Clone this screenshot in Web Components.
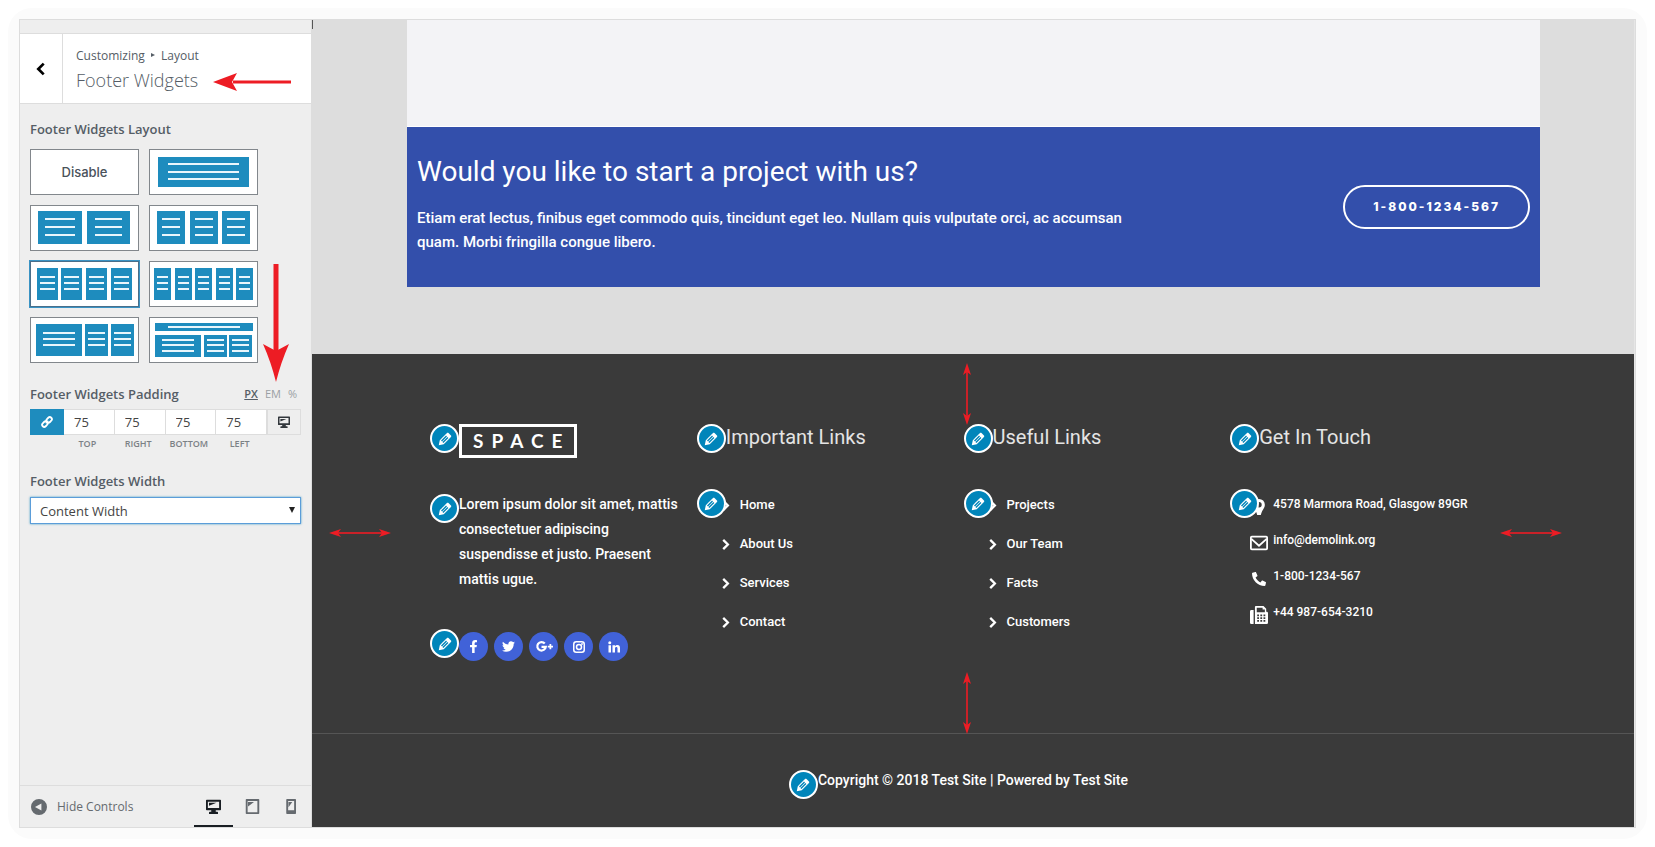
<!DOCTYPE html>
<html lang="en">
<head>
<meta charset="utf-8">
<title>Customizing - Footer Widgets</title>
<style>
  html {
    height: 100%;
  }

  body {
    margin: 0;
    min-height: 100%;
    box-sizing: border-box;
    padding: 8px;
    display: flex;
    background: #fff;
    font-family: "Open Sans", "Noto Sans", sans-serif;
  }

  customizer-app {
    flex: 1;
  }
</style>
</head>
<body>
<customizer-app></customizer-app>

<script>
const makeTemplate = (html) => {
  const template = document.createElement('template');
  template.innerHTML = html;
  return template;
};

class BaseElement extends HTMLElement {
  constructor() {
    super();
    this.shadowRoot_ = this.attachShadow({ mode: 'open' });
    this.shadowRoot_.appendChild(this.constructor.template.content.cloneNode(true));
  }

  $(selector) {
    return this.shadowRoot_.querySelector(selector);
  }
}

/* ---------- icons ---------- */

const icons = {
  pencil: ['0 0 20 20', '<path d="M13.89 3.39l2.71 2.72c.46.46.42 1.24.03 1.64l-8.01 8.02-5.56 1.16 1.16-5.58s7.6-7.63 7.99-8.03c.39-.39 1.22-.39 1.68.07zm-2.73 2.79l-5.59 5.61 1.11 1.11 5.54-5.65zm-2.97 8.23l5.58-5.6-1.07-1.08-5.59 5.6z"/>'],
  back: ['0 0 20 20', '<path d="M13 4l-6 6 6 6" fill="none" stroke="currentColor" stroke-width="3"/>'],
  desktop: ['0 0 20 20', '<path fill-rule="evenodd" d="M1 1h18a1 1 0 0 1 1 1v12a1 1 0 0 1-1 1h-6v2h2a1 1 0 0 1 1 1v2H4v-2a1 1 0 0 1 1-1h2v-2H1a1 1 0 0 1-1-1V2a1 1 0 0 1 1-1zm1.500 2.500v8.500h15v-8.500zM4 5h10L4 9z"/>'],
  tablet: ['0 0 20 20', '<path fill-rule="evenodd" d="M2 0h16a1 1 0 0 1 1 1v18a1 1 0 0 1-1 1H2a1 1 0 0 1-1-1V1a1 1 0 0 1 1-1zm1.500 2.500v15h13v-15zM4 4h8L4 10z"/>'],
  mobile: ['0 0 20 20', '<path fill-rule="evenodd" d="M4 0h11a1 1 0 0 1 1 1v18a1 1 0 0 1-1 1H4a1 1 0 0 1-1-1V1a1 1 0 0 1 1-1zm1.500 2.500v12.500h8v-12.500zM6 4h5l-5 7z"/>'],
  collapse: ['0 0 20 20', '<path fill-rule="evenodd" d="M10 0a10 10 0 1 1 0 20 10 10 0 0 1 0-20zm3 5.500L5 10l8 4.500z"/>'],
  link: ['0 0 20 20', '<g fill="none" stroke="currentColor" stroke-width="3" transform="rotate(-45 10 10)"><rect x="0" y="6.500" width="10" height="7" rx="3.500"/><rect x="10" y="6.500" width="10" height="7" rx="3.500"/><path d="M7 10h6" stroke-width="2"/></g>'],
  chevron: ['0 0 10 14', '<path d="M2 2l5 5-5 5" fill="none" stroke="currentColor" stroke-width="2.500"/>'],
  facebook: ['0 0 320 512', '<path d="M279.140 288l14.220-92.660h-88.910v-60.130c0-25.350 12.420-50.060 52.240-50.060h40.420V6.260S260.430 0 225.360 0c-73.220 0-121.080 44.380-121.080 124.720v70.620H22.890V288h81.390v224h100.170V288z"/>'],
  twitter: ['0 0 512 512', '<path d="M459.370 151.716c.325 4.548.325 9.097.325 13.645 0 138.720-105.583 298.558-298.558 298.558-59.452 0-114.680-17.219-161.137-47.106 8.447.974 16.568 1.299 25.340 1.299 49.055 0 94.213-16.568 130.274-44.832-46.132-.975-84.792-31.188-98.112-72.772 6.498.974 12.995 1.624 19.818 1.624 9.421 0 18.843-1.300 27.614-3.573-48.081-9.747-84.143-51.980-84.143-102.985v-1.299c13.969 7.797 30.214 12.670 47.431 13.319-28.264-18.843-46.781-51.005-46.781-87.391 0-19.492 5.197-37.360 14.294-52.954 51.655 63.675 129.300 105.258 216.365 109.807-1.624-7.797-2.599-15.918-2.599-24.040 0-57.828 46.782-104.934 104.934-104.934 30.213 0 57.502 12.670 76.670 33.137 23.715-4.548 46.456-13.320 66.599-25.340-7.798 24.366-24.366 44.833-46.132 57.827 21.117-2.273 41.584-8.122 60.426-16.243-14.292 20.791-32.161 39.308-52.628 54.253z"/>'],
  google: ['0 0 36 24', '<path d="M19.500 6A8.500 8.500 0 1 0 21.500 12.500H13" fill="none" stroke="currentColor" stroke-width="4.500"/><path d="M29 7h3.500v3.500H36V14h-3.500v3.500H29V14h-3.500v-3.500H29z"/>'],
  instagram: ['0 0 24 24', '<g fill="none" stroke="currentColor" stroke-width="3"><rect x="1.500" y="1.500" width="21" height="21" rx="5"/><circle cx="12" cy="12" r="5"/></g><circle cx="18" cy="6" r="1.800"/>'],
  linkedin: ['0 0 24 24', '<circle cx="3.500" cy="3.500" r="3"/><path d="M1 8.500h5V23H1zM9 8.500h5v2c1-1.600 2.500-2.400 4.600-2.400 3.800 0 5.400 2.300 5.400 6.200V23h-5v-8c0-1.900-.7-3-2.300-3-1.700 0-2.700 1.200-2.700 3V23H9z"/>'],
  pin: ['0 0 20 20', '<path fill-rule="evenodd" d="M10 1a6.500 6.500 0 0 1 6.500 6.500c0 4-3.500 6-4.500 11.500H8C7 13.500 3.500 11.500 3.500 7.500A6.500 6.500 0 0 1 10 1zm0 3.500a3 3 0 1 0 0 6 3 3 0 0 0 0-6z"/>'],
  mail: ['0 0 20 20', '<g fill="none" stroke="currentColor" stroke-width="2"><rect x="1" y="3" width="18" height="14" rx="1"/><path d="M1.500 5.500L10 13l8.500-7.500"/></g>'],
  phone: ['0 0 512 512', '<path transform="translate(512) scale(-1 1)" d="M493.400 24.600l-104-24c-11.300-2.600-22.900 3.300-27.500 13.900l-48 112c-4.200 9.800-1.400 21.300 6.900 28l60.600 49.600c-36 76.700-98.900 140.500-177.200 177.200l-49.600-60.600c-6.800-8.300-18.200-11.100-28-6.900l-112 48C3.900 366.500-2 378.100.6 389.400l24 104C27.100 504.200 36.700 512 48 512c256.100 0 464-207.500 464-464 0-11.200-7.700-20.900-18.600-23.400z"/>'],
  fax: ['0 0 20 20', '<path d="M0 6a1.500 1.500 0 0 1 1.500-1.500H4V20H1.500A1.500 1.500 0 0 1 0 18.500z"/><path fill-rule="evenodd" d="M5.500 1a1 1 0 0 1 1-1H15l3 3v3.500h.5A1.500 1.500 0 0 1 20 8v10.500a1.500 1.500 0 0 1-1.500 1.500h-13zM7.500 2v5h9V4H14V2zM8 9.500v2h2v-2zm3.500 0v2h2v-2zm3.500 0v2h2v-2zM8 12.500v2h2v-2zm3.500 0v2h2v-2zm3.500 0v2h2v-2zM8 15.500v2h2v-2zm3.500 0v2h2v-2zm3.500 0v2h2v-2z"/>']
};

class UiIcon extends BaseElement {
  connectedCallback() {
    const [box, shapes] = icons[this.getAttribute('name')];
    this.$('svg').setAttribute('viewBox', box);
    this.$('svg').innerHTML = shapes;
  }
}

UiIcon.template = makeTemplate(`
<style>
  :host {
    display: inline-flex;
    width: 16px;
    height: 16px;
  }

  svg {
    width: 100%;
    height: 100%;
    fill: currentColor;
  }
</style>
<svg aria-hidden="true"></svg>
`);
customElements.define('ui-icon', UiIcon);

/* ---------- red pointers ---------- */

const pointers = {
  left: [78, 18, '<path d="M20 9h58" stroke-width="3"/><path class="head" d="M0 9L24 0l-5 9 5 9z"/>'],
  down: [28, 118, '<path d="M14 0v90" stroke-width="5"/><path class="head" d="M14 118Q9 98 1 80l13 7 13-7Q19 98 14 118z"/>'],
  horizontal: [62, 8, '<path d="M6 4h50" stroke-width="2" opacity="0.8"/><path class="head" d="M0 4l12-4-3 4 3 4zM62 4L50 0l3 4-3 4z"/>'],
  vertical: [8, 62, '<path d="M4 6v50" stroke-width="2" opacity="0.8"/><path class="head" d="M4 0L0 12l4-3 4 3zM4 62L0 50l4 3 4-3z"/>']
};

class PointerArrow extends BaseElement {
  connectedCallback() {
    const [width, height, shapes] = pointers[this.getAttribute('direction')];
    const $svg = this.$('svg');
    $svg.setAttribute('width', width);
    $svg.setAttribute('height', height);
    $svg.innerHTML = shapes;
  }
}

PointerArrow.template = makeTemplate(`
<style>
  :host {
    display: block;
    position: absolute;
    pointer-events: none;
  }

  svg {
    display: block;
    stroke: #ed1c24;
    fill: #ed1c24;
  }

  .head {
    stroke: none;
  }
</style>
<svg aria-hidden="true"></svg>
`);
customElements.define('pointer-arrow', PointerArrow);

/* ---------- footer layout picker ---------- */

// block: x, y, width, height, line inset, line positions
const rows = [14, 22, 30];
const smallRows = [16, 22, 28];
const layouts = [
  { name: 'Disable' },
  { name: 'One column', blocks: [[9, 8, 91, 30, 10, [15, 23, 30]]] },
  { name: 'Two columns', blocks: [[8, 6, 44, 33, 7, rows], [57, 6, 43, 33, 8, rows]] },
  { name: 'Three columns', blocks: [8, 41, 73].map(x => [x, 6, 28, 33, 5, rows]) },
  { name: 'Four columns', blocks: [7, 31, 56, 81].map(x => [x, 7, 21, 32, 3, smallRows]), checked: true },
  { name: 'Five columns', blocks: [5, 26, 46, 67, 87].map(x => [x, 7, 17, 32, 3, smallRows]) },
  { name: 'Wide and two columns', blocks: [[6, 7, 46, 32, 7, smallRows], [55, 7, 23, 32, 3, smallRows], [81, 7, 23, 32, 3, smallRows]] },
  { name: 'Full row, wide and two columns', blocks: [[6, 6, 98, 8, 13, [10]], [6, 18, 46, 22, 7, [23, 28, 34]], [55, 18, 23, 22, 3, [23, 28, 34]], [80, 18, 23, 22, 3, [23, 28, 34]]] }
];

const drawBlock = ([x, y, w, h, inset, lines]) => `
  <rect x="${x}" y="${y}" width="${w}" height="${h}" fill="#1e8cbe"/>
  ${lines.map(ly => `<rect x="${x + inset}" y="${ly - 1}" width="${w - 2 * inset}" height="2" fill="#e9f6fc"/>`).join('')}
`;

class LayoutPicker extends BaseElement {
  connectedCallback() {
    this.$('.options').innerHTML = layouts.map(layout => `
      <label>
        <input type="radio" name="layout" aria-label="${layout.name}" ${layout.checked ? 'checked' : ''}>
        ${layout.blocks
          ? `<svg width="109" height="46" aria-hidden="true">${layout.blocks.map(drawBlock).join('')}</svg>`
          : `<span>${layout.name}</span>`}
      </label>
    `).join('');
  }
}

LayoutPicker.template = makeTemplate(`
<style>
  :host {
    display: block;
  }

  .options {
    display: grid;
    grid-template-columns: 109px 109px;
    gap: 10px;
  }

  label {
    position: relative;
    display: flex;
    align-items: center;
    justify-content: center;
    height: 46px;
    background: #fff;
    box-shadow: inset 0 0 0 1px #82878c;
    color: #4a525b;
    font: 500 13px Inter, sans-serif;
    cursor: pointer;
  }

  label:has(:checked) {
    box-shadow: inset 0 0 0 1px #4a6f8a, 0 0 0 1px #3a93c4;
  }

  input {
    position: absolute;
    inset: 0;
    margin: 0;
    opacity: 0;
  }
</style>
<div class="options" role="radiogroup" aria-label="Footer Widgets Layout"></div>
`);
customElements.define('layout-picker', LayoutPicker);

/* ---------- padding control ---------- */

class PaddingControl extends BaseElement {
  connectedCallback() {
    this.$('.sides').innerHTML = ['Top', 'Right', 'Bottom', 'Left'].map(side => `
      <label>
        <input type="text" inputmode="numeric" value="75">
        <span>${side}</span>
      </label>
    `).join('');
    this.$('.units').addEventListener('click', this.onUnitClick.bind(this));
  }

  onUnitClick(event) {
    if (!event.target.matches('button')) {
      return;
    }
    this.$('.units .active').classList.remove('active');
    event.target.classList.add('active');
  }
}

PaddingControl.template = makeTemplate(`
<style>
  :host {
    display: block;
  }

  header {
    display: flex;
    justify-content: space-between;
    align-items: center;
    margin-bottom: 6px;
    padding-right: 4px;
  }

  h3 {
    margin: 0;
    font-size: 13px;
    line-height: 18px;
    font-weight: 600;
  }

  .units {
    display: flex;
    gap: 7px;
  }

  button {
    padding: 0;
    border: 0;
    background: none;
    font: inherit;
    cursor: pointer;
  }

  .units button {
    color: #9a9fa4;
    font-size: 11px;
    line-height: 12px;
  }

  .units .active {
    color: #555d66;
    font-weight: 600;
    text-decoration: underline;
  }

  .row {
    display: flex;
    align-items: flex-start;
  }

  .side-button {
    display: flex;
    align-items: center;
    justify-content: center;
    width: 34px;
    height: 26px;
    box-sizing: border-box;
  }

  .linked {
    background: #1e8cbe;
    color: #fff;
  }

  .device {
    border: 1px solid #ddd;
    color: #32373c;
  }

  .linked ui-icon {
    width: 12px;
    height: 12px;
  }

  .device ui-icon {
    width: 12px;
    height: 12px;
  }

  .sides {
    flex: 1;
    display: grid;
    grid-template-columns: repeat(4, 1fr);
  }

  label {
    display: flex;
    flex-direction: column;
    gap: 3px;
    min-width: 0;
    text-align: center;
    text-transform: uppercase;
    color: #7c8186;
    font-size: 9px;
    line-height: 12px;
    font-weight: 600;
  }

  label span {
    padding-right: 4px;
  }

  input {
    width: 100%;
    height: 26px;
    box-sizing: border-box;
    border: 1px solid #ddd;
    border-left-width: 0;
    padding: 0 10px;
    background: #fff;
    color: #444;
    font: 13px "Open Sans", sans-serif;
  }
</style>
<header>
  <h3>Footer Widgets Padding</h3>
  <div class="units">
    <button type="button" class="active">PX</button>
    <button type="button">EM</button>
    <button type="button">%</button>
  </div>
</header>
<div class="row">
  <button type="button" class="side-button linked" aria-label="Link values"><ui-icon name="link"></ui-icon></button>
  <div class="sides"></div>
  <button type="button" class="side-button device" aria-label="Device"><ui-icon name="desktop"></ui-icon></button>
</div>
`);
customElements.define('padding-control', PaddingControl);

/* ---------- sidebar ---------- */

class CustomizerSidebar extends BaseElement {}

CustomizerSidebar.template = makeTemplate(`
<style>
  :host {
    position: relative;
    display: flex;
    flex-direction: column;
    width: 292px;
    box-sizing: border-box;
    border-right: 1px solid #ddd;
    background: #eee;
    color: #555d66;
  }

  .top {
    height: 13px;
    border-bottom: 1px solid #ddd;
  }

  .title {
    position: relative;
    display: flex;
    background: #fff;
    border-bottom: 1px solid #ddd;
  }

  .back {
    width: 43px;
    padding: 0;
    border: 0;
    border-right: 1px solid #ddd;
    background: none;
    color: #000;
    cursor: pointer;
  }

  .back ui-icon {
    width: 18px;
    height: 18px;
    vertical-align: middle;
  }

  .heading {
    padding: 13px 13px 10px;
  }

  .crumbs {
    font-size: 12px;
    line-height: 18px;
  }

  .crumbs i {
    display: inline-block;
    margin: 0 3px;
    border: 2px solid transparent;
    border-left: 4px solid #555d66;
    border-right: 0;
    vertical-align: 3px;
  }

  h2 {
    margin: 3px 0 0;
    font-size: 18px;
    line-height: 25px;
    font-weight: 300;
  }

  .title pointer-arrow {
    right: 20px;
    top: 39px;
  }

  .controls {
    flex: 1;
    padding: 16px 10px 17px;
  }

  h3, .width-label {
    display: block;
    margin: 0 0 11px;
    font-size: 13px;
    line-height: 18px;
    font-weight: 600;
  }

  .controls > pointer-arrow {
    right: 21px;
    top: 244px;
  }

  layout-picker {
    margin-bottom: 22px;
  }

  padding-control {
    margin-bottom: 22px;
  }

  .width-label {
    margin-bottom: 7px;
  }

  .select {
    position: relative;
  }

  select {
    width: 100%;
    height: 27px;
    padding: 0 9px;
    appearance: none;
    border: 1px solid #5b9dd9;
    border-radius: 0;
    box-shadow: 0 0 2px rgba(30, 140, 190, 0.8);
    background: #fff;
    color: #444;
    font: 13px "Open Sans", sans-serif;
  }

  .select::after {
    content: "";
    position: absolute;
    right: 6px;
    top: 10px;
    border: 3px solid transparent;
    border-top: 6px solid #222;
    border-bottom: 0;
  }

  footer {
    display: flex;
    align-items: stretch;
    justify-content: space-between;
    height: 41px;
    border-top: 1px solid #ddd;
  }

  footer button {
    display: flex;
    align-items: center;
    justify-content: center;
    padding: 0;
    border: 0;
    background: none;
    color: #656a6f;
    font: inherit;
    font-size: 12px;
    cursor: pointer;
  }

  .hide {
    gap: 10px;
    padding-left: 11px;
  }

  .devices {
    display: flex;
  }

  .devices button {
    width: 39px;
  }

  .devices .active {
    color: #191e23;
    box-shadow: inset 0 -2px #191e23;
  }

  .devices ui-icon {
    width: 15px;
    height: 15px;
  }
</style>
<div class="top"></div>
<div class="title">
  <button type="button" class="back" aria-label="Back"><ui-icon name="back"></ui-icon></button>
  <div class="heading">
    <div class="crumbs">Customizing <i></i> Layout</div>
    <h2>Footer Widgets</h2>
  </div>
  <pointer-arrow direction="left"></pointer-arrow>
</div>
<div class="controls">
  <h3>Footer Widgets Layout</h3>
  <layout-picker></layout-picker>
  <padding-control></padding-control>
  <label class="width-label" for="width">Footer Widgets Width</label>
  <div class="select">
    <select id="width">
      <option>Content Width</option>
      <option>Full Width</option>
    </select>
  </div>
  <pointer-arrow direction="down"></pointer-arrow>
</div>
<footer>
  <button type="button" class="hide"><ui-icon name="collapse"></ui-icon>Hide Controls</button>
  <div class="devices">
    <button type="button" class="active" aria-label="Desktop"><ui-icon name="desktop"></ui-icon></button>
    <button type="button" aria-label="Tablet"><ui-icon name="tablet"></ui-icon></button>
    <button type="button" aria-label="Mobile"><ui-icon name="mobile"></ui-icon></button>
  </div>
</footer>
`);
customElements.define('customizer-sidebar', CustomizerSidebar);

/* ---------- call to action ---------- */

class CallToAction extends BaseElement {}

CallToAction.template = makeTemplate(`
<style>
  :host {
    display: flex;
    align-items: center;
    justify-content: space-between;
    padding: 0 10px;
    background: #334fab;
    color: #fff;
  }

  .text {
    max-width: 720px;
    padding: 26px 0 33px;
    font: 500 15px/24px Roboto, sans-serif;
  }

  ::slotted(h2) {
    margin: 0 0 15px;
    font: 28px/38px Roboto, sans-serif;
  }

  ::slotted(p) {
    margin: 0;
  }

  ::slotted(a) {
    border: 2px solid #fff;
    border-radius: 22px;
    padding: 0 28px;
    color: #fff;
    font: 800 12px/40px Inter, sans-serif;
    letter-spacing: 2px;
    text-decoration: none;
  }
</style>
<div class="text"><slot></slot></div>
<slot name="action"></slot>
`);
customElements.define('call-to-action', CallToAction);

/* ---------- footer widgets ---------- */

// wraps a piece of the preview and hangs the edit button on its left side
class EditableArea extends BaseElement {}

EditableArea.template = makeTemplate(`
<style>
  :host {
    position: relative;
    display: block;
  }

  button {
    position: absolute;
    z-index: 1;
    left: -29px;
    top: var(--edit-top, 0);
    display: flex;
    align-items: center;
    justify-content: center;
    width: 29px;
    height: 29px;
    padding: 0;
    border: 2px solid #fff;
    border-radius: 50%;
    background: #0085ba;
    color: #fff;
    cursor: pointer;
  }

  ui-icon {
    width: 18px;
    height: 18px;
    flex: none;
  }
</style>
<button type="button" aria-label="Edit"><ui-icon name="pencil"></ui-icon></button>
<slot></slot>
`);
customElements.define('editable-area', EditableArea);

class LinkList extends BaseElement {
  connectedCallback() {
    this.$('ul').innerHTML = this.getAttribute('items').split(',').map(item => `
      <li><ui-icon name="chevron"></ui-icon><a href="#">${item}</a></li>
    `).join('');
  }
}

LinkList.template = makeTemplate(`
<style>
  :host {
    display: block;
  }

  ul {
    display: flex;
    flex-direction: column;
    gap: 21px;
    margin: 0;
    padding: 0;
    list-style: none;
  }

  li {
    display: flex;
    align-items: center;
    gap: 9px;
    margin-left: -5px;
    font: 500 13px/18px Roboto, sans-serif;
  }

  ui-icon {
    width: 10px;
    height: 13px;
  }

  a {
    color: inherit;
    text-decoration: none;
  }
</style>
<ul></ul>
`);
customElements.define('link-list', LinkList);

class ContactList extends BaseElement {
  connectedCallback() {
    const contacts = [
      ['pin', '4578 Marmora Road, Glasgow 89GR'],
      ['mail', 'info@demolink.org'],
      ['phone', '1-800-1234-567'],
      ['fax', '+44 987-654-3210']
    ];
    this.$('ul').innerHTML = contacts.map(([icon, text]) => `
      <li><ui-icon name="${icon}" class="${icon}"></ui-icon><span>${text}</span></li>
    `).join('');
  }
}

ContactList.template = makeTemplate(`
<style>
  :host {
    display: block;
  }

  ul {
    display: flex;
    flex-direction: column;
    gap: 18px;
    margin: 0;
    padding: 0;
    list-style: none;
  }

  li {
    display: grid;
    grid-template-columns: 18px auto;
    gap: 5px;
    justify-content: start;
    justify-items: center;
    margin-left: -9px;
    font: 500 12px/18px Roboto, sans-serif;
  }

  ui-icon {
    width: 18px;
    height: 18px;
    margin-top: 3px;
    margin-bottom: -3px;
  }

  .phone {
    width: 14px;
    height: 18px;
  }
</style>
<ul></ul>
`);
customElements.define('contact-list', ContactList);

class SocialLinks extends BaseElement {
  connectedCallback() {
    this.$('nav').innerHTML = ['facebook', 'twitter', 'google', 'instagram', 'linkedin'].map(name => `
      <a href="#" aria-label="${name}"><ui-icon name="${name}" class="${name}"></ui-icon></a>
    `).join('');
  }
}

SocialLinks.template = makeTemplate(`
<style>
  :host {
    display: block;
  }

  nav {
    display: flex;
    gap: 6px;
  }

  a {
    display: flex;
    align-items: center;
    justify-content: center;
    width: 29px;
    height: 29px;
    border-radius: 50%;
    background: #4162d8;
    color: #fff;
  }

  ui-icon {
    width: 13px;
    height: 13px;
  }

  .google {
    width: 18px;
  }

  .instagram, .linkedin {
    width: 12px;
    height: 12px;
  }
</style>
<nav></nav>
`);
customElements.define('social-links', SocialLinks);

class FooterWidgets extends BaseElement {}

FooterWidgets.template = makeTemplate(`
<style>
  :host {
    position: relative;
    display: block;
    padding: 70px 95px 72px;
    border-bottom: 1px solid #555;
  }

  .columns {
    display: grid;
    grid-template-columns: repeat(4, 1fr);
    padding: 0 13px 0 52px;
  }

  h3 {
    margin: 0;
    color: #e4e4e4;
    font: 20px/26px Roboto, sans-serif;
  }

  .logo {
    display: inline-block;
    border: 3px solid #fff;
    padding: 0 3px 0 11px;
    color: #fff;
    font: 700 19px/28px Lato, sans-serif;
    letter-spacing: 8px;
    text-decoration: none;
    vertical-align: top;
  }

  p {
    margin: 0;
    max-width: 222px;
    font: 500 14px/25px Roboto, sans-serif;
  }

  .about {
    --edit-top: 2px;
    margin: 34px 0 40px;
  }

  .links {
    --edit-top: -7px;
    margin-top: 46px;
  }

  .contacts {
    --edit-top: -6px;
    margin-top: 45px;
  }

  .social {
    --edit-top: -3px;
  }

  .north, .south {
    left: calc(50% - 10px);
  }

  .north {
    top: 9px;
  }

  .south {
    bottom: -1px;
  }

  .west, .east {
    top: 175px;
  }

  .west {
    left: 17px;
  }

  .east {
    right: 72px;
  }
</style>
<div class="columns">
  <section>
    <editable-area><a class="logo" href="#">SPACE</a></editable-area>
    <editable-area class="about"><p>Lorem ipsum dolor sit amet, mattis consectetuer adipiscing suspendisse et justo. Praesent mattis ugue.</p></editable-area>
    <editable-area class="social"><social-links></social-links></editable-area>
  </section>
  <section>
    <editable-area><h3>Important Links</h3></editable-area>
    <editable-area class="links"><link-list items="Home,About Us,Services,Contact"></link-list></editable-area>
  </section>
  <section>
    <editable-area><h3>Useful Links</h3></editable-area>
    <editable-area class="links"><link-list items="Projects,Our Team,Facts,Customers"></link-list></editable-area>
  </section>
  <section>
    <editable-area><h3>Get In Touch</h3></editable-area>
    <editable-area class="contacts"><contact-list></contact-list></editable-area>
  </section>
</div>
<pointer-arrow class="north" direction="vertical"></pointer-arrow>
<pointer-arrow class="south" direction="vertical"></pointer-arrow>
<pointer-arrow class="west" direction="horizontal"></pointer-arrow>
<pointer-arrow class="east" direction="horizontal"></pointer-arrow>
`);
customElements.define('footer-widgets', FooterWidgets);

/* ---------- site preview ---------- */

class SitePreview extends BaseElement {}

SitePreview.template = makeTemplate(`
<style>
  :host {
    position: relative;
    display: flex;
    flex-direction: column;
    min-width: 0;
    background: #ddd;
    border-right: 1px solid #e6e6e6;
  }

  /* end of the toolbar edge that shows above the preview */
  :host::before {
    content: "";
    position: absolute;
    left: 0;
    top: 0;
    width: 1px;
    height: 9px;
    background: #555;
  }

  main {
    flex: 1;
    display: flex;
    flex-direction: column;
    margin: 0 94px 67px 95px;
  }

  .page {
    flex: 1;
    min-height: 105px;
    background: #f3f3f6;
    border-bottom: 1px solid #fff;
  }

  footer {
    background: #3a3a3a;
    color: #fff;
  }

  .copyright {
    display: flex;
    justify-content: center;
    padding: 34px 0 35px;
    font: 500 14px/24px Roboto, sans-serif;
  }

  .copyright editable-area {
    --edit-top: 2px;
  }
</style>
<main>
  <div class="page"></div>
  <call-to-action>
    <h2>Would you like to start a project with us?</h2>
    <p>Etiam erat lectus, finibus eget commodo quis, tincidunt eget leo. Nullam quis vulputate orci, ac accumsan quam. Morbi fringilla congue libero.</p>
    <a slot="action" href="#">1-800-1234-567</a>
  </call-to-action>
</main>
<footer>
  <footer-widgets></footer-widgets>
  <div class="copyright">
    <editable-area>Copyright © 2018 Test Site | Powered by Test Site</editable-area>
  </div>
</footer>
`);
customElements.define('site-preview', SitePreview);

class CustomizerApp extends BaseElement {}

CustomizerApp.template = makeTemplate(`
<style>
  :host {
    display: flex;
    padding: 11px;
    border-radius: 24px;
    background: #fbfbfb;
  }

  .frame {
    flex: 1;
    display: flex;
    min-width: 0;
    border: 1px solid #ddd;
  }

  customizer-sidebar {
    flex: none;
  }

  site-preview {
    flex: 1;
  }
</style>
<div class="frame">
  <customizer-sidebar></customizer-sidebar>
  <site-preview></site-preview>
</div>
`);
customElements.define('customizer-app', CustomizerApp);
</script>
</body>
</html>
